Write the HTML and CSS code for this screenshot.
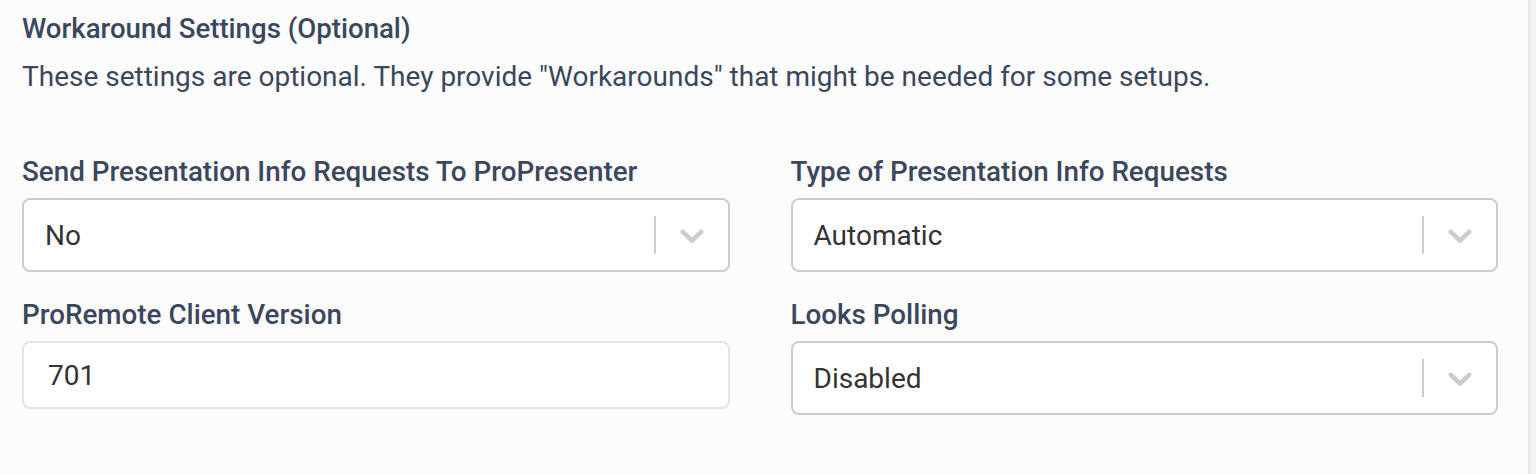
FILE: index.html
```html
<!DOCTYPE html>
<html>
<head>
<meta charset="utf-8">
<link rel="stylesheet" href="styles.css">
</head>
<body>
<div class="page">
  <div class="panel">
    <h2 class="title">Workaround Settings (Optional)</h2>
    <p class="desc">These settings are optional. They provide "Workarounds" that might be needed for some setups.</p>
    <div class="grid">
      <div class="field">
        <label class="label">Send Presentation Info Requests To ProPresenter</label>
        <div class="select">
          <span class="value">No</span>
          <span class="sep"></span>
          <span class="chev"><svg width="40" height="40" viewBox="0 0 20 20"><path fill="#cccccc" d="M4.516 7.548c0.436-0.446 1.043-0.481 1.576 0l3.908 3.747 3.908-3.747c0.533-0.481 1.141-0.446 1.574 0 0.436 0.445 0.408 1.197 0 1.615-0.406 0.418-4.695 4.502-4.695 4.502-0.217 0.223-0.502 0.335-0.787 0.335s-0.57-0.112-0.789-0.335c0 0-4.287-4.084-4.695-4.502s-0.436-1.170 0-1.615z"/></svg></span>
        </div>
      </div>
      <div class="field">
        <label class="label">Type of Presentation Info Requests</label>
        <div class="select">
          <span class="value">Automatic</span>
          <span class="sep"></span>
          <span class="chev"><svg width="40" height="40" viewBox="0 0 20 20"><path fill="#cccccc" d="M4.516 7.548c0.436-0.446 1.043-0.481 1.576 0l3.908 3.747 3.908-3.747c0.533-0.481 1.141-0.446 1.574 0 0.436 0.445 0.408 1.197 0 1.615-0.406 0.418-4.695 4.502-4.695 4.502-0.217 0.223-0.502 0.335-0.787 0.335s-0.57-0.112-0.789-0.335c0 0-4.287-4.084-4.695-4.502s-0.436-1.170 0-1.615z"/></svg></span>
        </div>
      </div>
      <div class="field">
        <label class="label">ProRemote Client Version</label>
        <div class="input">701</div>
      </div>
      <div class="field">
        <label class="label">Looks Polling</label>
        <div class="select">
          <span class="value">Disabled</span>
          <span class="sep"></span>
          <span class="chev"><svg width="40" height="40" viewBox="0 0 20 20"><path fill="#cccccc" d="M4.516 7.548c0.436-0.446 1.043-0.481 1.576 0l3.908 3.747 3.908-3.747c0.533-0.481 1.141-0.446 1.574 0 0.436 0.445 0.408 1.197 0 1.615-0.406 0.418-4.695 4.502-4.695 4.502-0.217 0.223-0.502 0.335-0.787 0.335s-0.57-0.112-0.789-0.335c0 0-4.287-4.084-4.695-4.502s-0.436-1.170 0-1.615z"/></svg></span>
        </div>
      </div>
    </div>
  </div>
  <div class="gutter"></div>
</div>
</body>
</html>
```
FILE: styles.css
```css
html, body {
  margin: 0;
  padding: 0;
  height: 100%;
}
body {
  font-family: Roboto, "Liberation Sans", sans-serif;
  background: #f4f4f4;
}
.page {
  display: flex;
  height: 474px;
}
.panel {
  width: 1530px;
  box-sizing: border-box;
  background: #fcfcfc;
  border-right: 2px solid #e6e6e6;
  padding: 11px 30px 0 22px;
}
.gutter {
  flex: 1;
  background: #f4f4f4;
}
.title {
  margin: 0;
  font-size: 27.6px;
  line-height: 36px;
  font-weight: 500;
  color: #3a475c;
}
.desc {
  margin: 12px 0 0 0;
  font-size: 28px;
  line-height: 36px;
  color: #3a475c;
}
.grid {
  margin-top: 59px;
  display: grid;
  grid-template-columns: 1fr 1fr;
  column-gap: 61px;
  row-gap: 25px;
}
.field {
  display: flex;
  flex-direction: column;
}
.label {
  font-size: 27.8px;
  line-height: 36px;
  font-weight: 500;
  color: #3a475c;
  margin-bottom: 8px;
}
.select {
  height: 74px;
  box-sizing: border-box;
  border: 2px solid #cccccc;
  border-radius: 8px;
  background: #ffffff;
  display: flex;
  align-items: center;
  padding-left: 21px;
}
.value {
  flex: 1;
  font-size: 28px;
  color: #333333;
}
.sep {
  width: 2px;
  height: 38px;
  background: #cccccc;
}
.chev {
  width: 72px;
  display: flex;
  justify-content: center;
  align-items: center;
}
.chev svg {
  display: block;
}
.input {
  height: 68px;
  box-sizing: border-box;
  border: 2px solid #e2e4e8;
  border-radius: 8px;
  background: #ffffff;
  display: flex;
  align-items: center;
  padding-left: 24px;
  font-size: 28px;
  color: #333333;
}
```
